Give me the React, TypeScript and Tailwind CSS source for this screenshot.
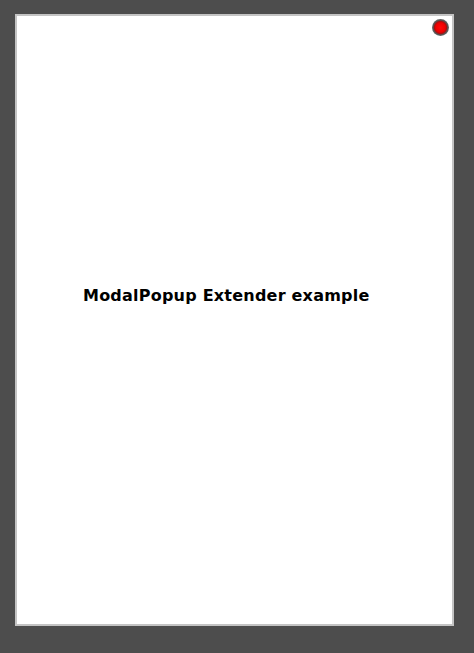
export default function App() {
  return (
    <div className="h-[653px] w-[474px] overflow-hidden bg-[#4d4d4d] pt-[14px] pl-[15px]">
      {/* Modal panel */}
      <div className="relative h-[612px] w-[439px] border-2 border-[#c4c4c4] bg-white pt-[270px] pl-[66px]">
        <button
          aria-label="Close"
          className="absolute top-[3px] right-[3px] h-[17px] w-[17px] rounded-full bg-[radial-gradient(circle_closest-side,#ff0a0a_0%,#f00000_55%,#a81010_72%,#555555_86%,#6a6a6a_100%)]"
        />
        <p className="font-['DejaVu_Sans',sans-serif] text-base leading-[19px] font-bold tracking-[0.22px] whitespace-nowrap text-black">
          ModalPopup Extender example
        </p>
      </div>
    </div>
  )
}
